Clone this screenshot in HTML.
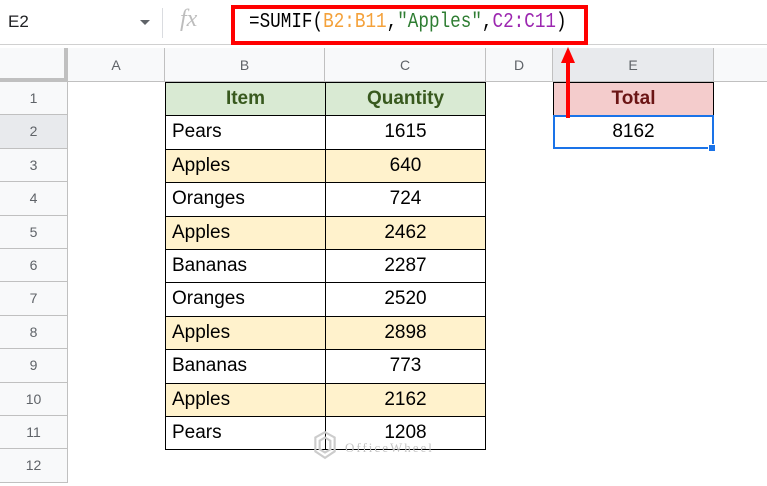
<!DOCTYPE html>
<html><head><style>
body{margin:0;width:767px;height:486px;overflow:hidden;background:#fff;font-family:"Liberation Sans",Arial,sans-serif;position:relative}
.a{position:absolute;box-sizing:border-box}
.rh{position:absolute;left:0;width:68px;background:#f8f9fa;border-bottom:1px solid #c0c0c0;border-right:1px solid #c0c0c0;color:#5f6368;font-size:14px;text-align:center;box-sizing:border-box}
.ch{position:absolute;top:48px;height:34px;background:#f8f9fa;border-right:1px solid #c0c0c0;border-bottom:1px solid #c0c0c0;color:#5f6368;font-size:14px;text-align:center;line-height:34px;box-sizing:border-box}
.c{position:absolute;box-sizing:border-box;font-size:19px;color:#000;border:1px solid #000;padding-left:6px}
</style></head><body>
<div class="a" style="left:0;top:0;width:767px;height:45px;border-bottom:1px solid #d0d0d0;background:#fff"></div>
<div class="a" style="left:8px;top:12px;font-size:17px;color:#202124">E2</div>
<div class="a" style="left:140px;top:20px;width:0;height:0;border-left:5px solid transparent;border-right:5px solid transparent;border-top:5px solid #5f6368"></div>
<div class="a" style="left:162px;top:8px;width:1px;height:30px;background:#dadce0"></div>
<div class="a" style="left:180px;top:6px;font-family:'Liberation Serif',serif;font-style:italic;font-size:24px;color:#bdbdbd">fx</div>
<div class="a" style="left:231px;top:5px;width:357px;height:40px;border:4px solid #f00"></div>
<div class="a" style="left:249px;top:11px;font-family:'Liberation Mono',monospace;font-size:21px;color:#000;transform:scaleX(0.84);transform-origin:left;white-space:nowrap">=SUMIF(<span style="color:#f4a13a">B2:B11</span>,<span style="color:#2e7d32">"Apples"</span>,<span style="color:#9c27b0">C2:C11</span>)</div>
<div class="a" style="left:0;top:48px;width:68px;height:34px;background:#f8f9fa;border-right:4px solid #c0c0c0;border-bottom:4px solid #c0c0c0"></div>
<div class="ch" style="left:68px;width:97px">A</div>
<div class="ch" style="left:165px;width:160px">B</div>
<div class="ch" style="left:325px;width:161px">C</div>
<div class="ch" style="left:486px;width:67px">D</div>
<div class="ch" style="left:553px;width:161px;background:#e8eaed">E</div>
<div class="ch" style="left:714px;width:60px"></div>
<div id="rows"></div>
<script>
var items=[["Item","Quantity"],["Pears","1615"],["Apples","640"],["Oranges","724"],["Apples","2462"],["Bananas","2287"],["Oranges","2520"],["Apples","2898"],["Bananas","773"],["Apples","2162"],["Pears","1208"]];
var h="";
for(var i=0;i<12;i++){var t=82+i*33.4;
h+='<div class="rh" style="top:'+t+'px;height:33.4px;line-height:33px;'+(i==1?'background:#e8eaed;':'')+'">'+(i+1)+'</div>';
if(i<11){var it=items[i];var bg=i==0?'#d9ead3':(it[0]=="Apples"?'#fff2cc':'#fff');var hd=i==0;
h+='<div class="c" style="left:165px;top:'+t+'px;width:161px;height:34.4px;line-height:32px;background:'+bg+';'+(hd?'text-align:center;font-weight:bold;color:#38591e;padding:0':'')+'">'+it[0]+'</div>';
h+='<div class="c" style="left:325px;top:'+t+'px;width:161px;height:34.4px;line-height:32px;text-align:center;padding:0;background:'+bg+';'+(hd?'font-weight:bold;color:#38591e':'')+'">'+it[1]+'</div>';}
}
document.getElementById('rows').innerHTML=h;
</script>
<div class="c" style="left:553px;top:82px;width:161px;height:34px;line-height:32px;text-align:center;padding:0;background:#f4cccc;font-weight:bold;color:#6b1515">Total</div>
<div class="c" style="left:553px;top:115px;width:161px;height:34px;line-height:30px;text-align:center;padding:0;border:2px solid #1a73e8">8162</div>
<div class="a" style="left:708px;top:144px;width:8px;height:8px;background:#1a73e8;border:1px solid #fff"></div>
<div class="a" style="left:566px;top:60px;width:4px;height:58px;background:#f00"></div>
<div class="a" style="left:561px;top:47px;width:0;height:0;border-left:7px solid transparent;border-right:7px solid transparent;border-bottom:16px solid #f00"></div>
<svg class="a" style="left:313px;top:430px" width="24" height="30" viewBox="0 0 22 28"><path d="M11 2 L20 7 L20 20 L11 26 L2 20 L2 7 Z M11 7 L16 10 L16 18 L11 21 L6 18 L6 10 Z" fill="none" stroke="#ccc" stroke-width="2"/></svg>
<div class="a" style="left:345px;top:440px;font-size:13px;color:#c4c4c4;letter-spacing:2px;font-family:'Liberation Serif',serif">OfficeWheel</div>
</body></html>
